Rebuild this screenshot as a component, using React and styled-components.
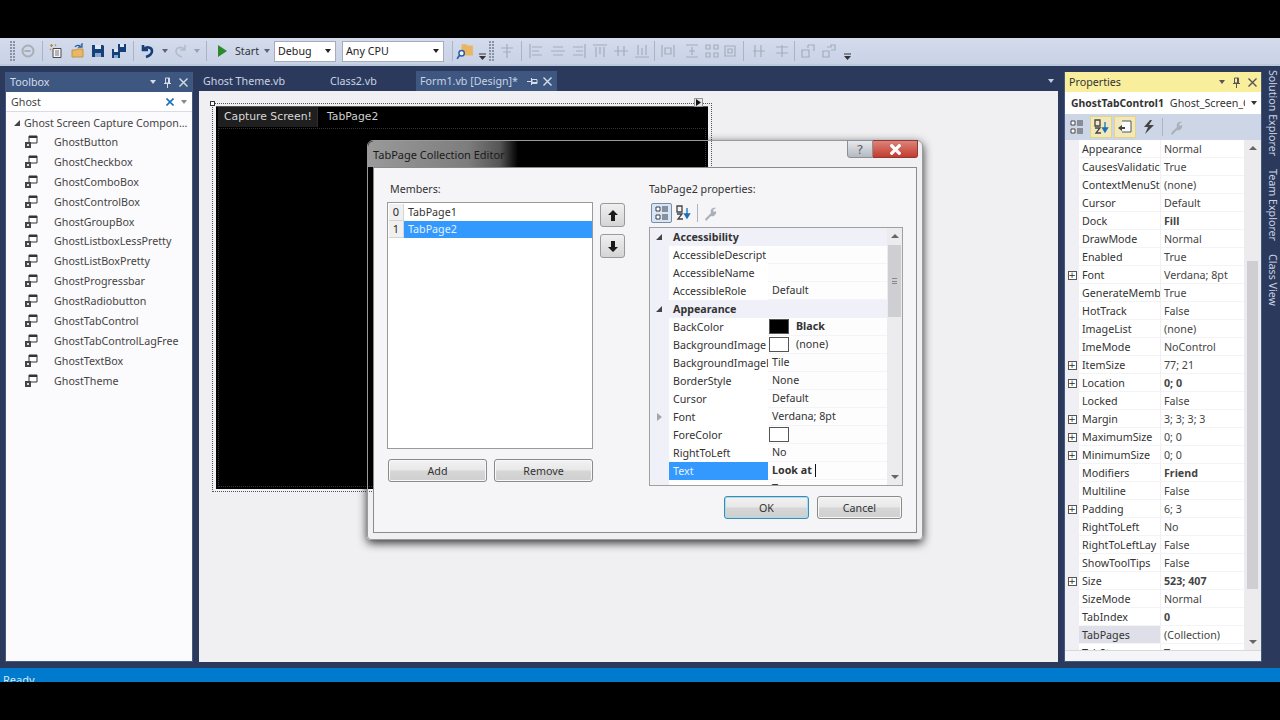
import styled, { createGlobalStyle } from 'styled-components'

const GlobalStyle = createGlobalStyle`
    html, body {
        margin: 0;
        padding: 0;
        background: #000;
        overflow: hidden;
    }
    * {
        box-sizing: border-box;
    }
    svg {
        flex: none;
    }
`

const toolboxItems = ['GhostButton', 'GhostCheckbox', 'GhostComboBox', 'GhostControlBox', 'GhostGroupBox', 'GhostListboxLessPretty', 'GhostListBoxPretty', 'GhostProgressbar', 'GhostRadiobutton', 'GhostTabControl', 'GhostTabControlLagFree', 'GhostTextBox', 'GhostTheme']

const propertyRows = [
    ['Appearance', 'Normal'],
    ['CausesValidatic', 'True'],
    ['ContextMenuSt', '(none)'],
    ['Cursor', 'Default'],
    ['Dock', 'Fill', 'bold'],
    ['DrawMode', 'Normal'],
    ['Enabled', 'True'],
    ['Font', 'Verdana; 8pt', '', 'plus'],
    ['GenerateMemb', 'True'],
    ['HotTrack', 'False'],
    ['ImageList', '(none)'],
    ['ImeMode', 'NoControl'],
    ['ItemSize', '77; 21', '', 'plus'],
    ['Location', '0; 0', 'bold', 'plus'],
    ['Locked', 'False'],
    ['Margin', '3; 3; 3; 3', '', 'plus'],
    ['MaximumSize', '0; 0', '', 'plus'],
    ['MinimumSize', '0; 0', '', 'plus'],
    ['Modifiers', 'Friend', 'bold'],
    ['Multiline', 'False'],
    ['Padding', '6; 3', '', 'plus'],
    ['RightToLeft', 'No'],
    ['RightToLeftLay', 'False'],
    ['ShowToolTips', 'False'],
    ['Size', '523; 407', 'bold', 'plus'],
    ['SizeMode', 'Normal'],
    ['TabIndex', '0', 'bold'],
    ['TabPages', '(Collection)', 'picked'],
    ['TabStop', 'True'],
]

const dialogRows = [
    { name: 'Accessibility', category: true },
    { name: 'AccessibleDescript', value: '' },
    { name: 'AccessibleName', value: '' },
    { name: 'AccessibleRole', value: 'Default' },
    { name: 'Appearance', category: true },
    { name: 'BackColor', value: 'Black', swatch: '#000', bold: true },
    { name: 'BackgroundImage', value: '(none)', swatch: '#fff' },
    { name: 'BackgroundImageL', value: 'Tile' },
    { name: 'BorderStyle', value: 'None' },
    { name: 'Cursor', value: 'Default' },
    { name: 'Font', value: 'Verdana; 8pt', arrow: true },
    { name: 'ForeColor', value: '', swatch: '#fff' },
    { name: 'RightToLeft', value: 'No' },
    { name: 'Text', value: 'Look at', bold: true, picked: true },
    { name: 'UseVisualStyleBack', value: 'True' },
]

function Svg({ size = 16, children }) {
    return <svg width={size} height={size} viewBox="0 0 16 16">{children}</svg>
}

const BackIcon = () => (
    <Svg>
        <circle cx="8" cy="8" r="5.5" fill="none" stroke="#a9adb4" strokeWidth="2" />
        <path d="M4.5 8h6" stroke="#a9adb4" strokeWidth="2" />
    </Svg>
)
const NewProjectIcon = () => (
    <Svg>
        <path d="M5 5.5h8v9H5z" fill="#f4f4f6" stroke="#4a4a4a" />
        <path d="M2 2.5h3M3.5 1v3M7 1.5l1 1.5M2 7l1-1" stroke="#c08a2c" strokeWidth="1.2" />
        <path d="M7 8h4M7 10h4M7 12h4" stroke="#777" />
    </Svg>
)
const OpenIcon = () => (
    <Svg>
        <path d="M2 7h4l1-1h6v8H2z" fill="#e9b866" stroke="#c6923f" />
        <path d="M5 4c1-2 4-2 5-1l-1 1h3V1l-1 1" fill="none" stroke="#2c5f9e" strokeWidth="1.3" />
    </Svg>
)
const SaveIcon = () => (
    <Svg>
        <path d="M2 2h11l1 1v11H2z" fill="#16407c" />
        <path d="M5 2h6v4H5z" fill="#dfe7f3" />
        <path d="M5 10h6v4H5z" fill="#8ea8cc" />
    </Svg>
)
const SaveAllIcon = () => (
    <Svg>
        <path d="M7 1h8v8H7z" fill="#16407c" />
        <path d="M9 1h4v3H9z" fill="#dfe7f3" />
        <path d="M1 6h8v9H1z" fill="#16407c" />
        <path d="M3 6h4v3H3z" fill="#dfe7f3" />
        <path d="M3 12h4v3H3z" fill="#8ea8cc" />
    </Svg>
)
const UndoIcon = ({ color = '#173f7a', width = 2.6 }) => (
    <Svg>
        <path d="M4 2v5h5" fill="none" stroke={color} strokeWidth={width} />
        <path d="M4.5 6.5C7 3 13 4 13 8c0 3-3 5-6 6" fill="none" stroke={color} strokeWidth={width} />
    </Svg>
)
const RedoIcon = () => (
    <Svg>
        <path d="M12 2v5H7" fill="none" stroke="#b3bcc8" strokeWidth="1.6" />
        <path d="M11.5 6.5C9 3 3 4 3 8c0 3 3 5 6 6" fill="none" stroke="#b3bcc8" strokeWidth="1.6" />
    </Svg>
)
const PlayIcon = () => (
    <Svg>
        <path d="M4 2l9 6-9 6z" fill="#2c8a2c" />
    </Svg>
)
const FindIcon = () => (
    <Svg size={18}>
        <path d="M5 2h4l1 1h5v9H5z" fill="#e9b560" />
        <circle cx="5" cy="10" r="2.4" fill="#f3f6fb" stroke="#2b5ea8" strokeWidth="1.3" />
        <path d="M3 12l-2 3" stroke="#2b5ea8" strokeWidth="1.6" />
    </Svg>
)

// layout icons on the right of the toolbar, all greyed out
const layoutPaths = {
    center: 'M8 1v14M2 5h12M4 9h8',
    alignLeft: 'M2 1v14M4 4h10M4 8h7M4 12h10',
    alignMid: 'M3 4h10M1 8h14M3 12h10',
    alignRight: 'M14 1v14M2 4h10M5 8h7M2 12h10',
    alignTop: 'M1 2h14M4 4v10M8 4v7M12 4v10',
    alignCenter: 'M1 8h14M5 3v10M11 3v10',
    alignBottom: 'M1 14h14M4 2v10M8 5v7M12 2v10',
    spaceH: 'M2 2v12M14 2v12M5 5h6v6H5z',
    spaceV: 'M2 2h12M2 14h12M8 4v8M5 8h6',
    tile: 'M2 2h4v4H2zM10 2h4v4h-4zM2 10h4v4H2zM10 10h4v4h-4z',
    order: 'M3 3h10v10H3zM6 6h4v4H6z',
    centerH: 'M4 2v12M10 2v12M2 8h12',
    centerV: 'M2 4h12M2 10h12M8 2v12',
    front: 'M2 7h7v7H2zM8 2h6v6M8 5V2',
    back: 'M2 8h6v6H2zM6 4h4V2h4v5h-4',
}

const LayoutIcon = ({ name }) => (
    <Svg>
        <path d={layoutPaths[name]} fill="none" stroke="#a4adba" strokeWidth="1.2" />
    </Svg>
)

const DownCaret = ({ color = '#5c6470' }) => (
    <svg width="6" height="4" viewBox="0 0 6 4"><path d="M0 0h6L3 4z" fill={color} /></svg>
)

const OverflowCaret = () => (
    <svg width="7" height="7" viewBox="0 0 7 7">
        <path d="M0 1h7" stroke="#333" />
        <path d="M0 3h7L3.5 7z" fill="#333" />
    </svg>
)

const PinIcon = ({ color }) => (
    <svg width="9" height="11" viewBox="0 0 9 11">
        <path d="M2.5 1h4v5h-4zM1 6.5h7M4.5 7v4M5.5 1v5" fill="none" stroke={color} />
    </svg>
)

const PinSideIcon = () => (
    <svg width="11" height="9" viewBox="0 0 11 9">
        <path d="M10 2.5v4H5v-4zM4.5 1v7M4 4.5H0M10 5.5H5" fill="none" stroke="#d5dde8" />
    </svg>
)

const CloseIcon = ({ color, size = 9, width = 1.4 }) => (
    <svg width={size} height={size} viewBox="0 0 9 9">
        <path d="M0.5 0.5l8 8M8.5 0.5l-8 8" stroke={color} strokeWidth={width} />
    </svg>
)

const ComponentIcon = () => (
    <svg width="14" height="14" viewBox="0 0 14 14">
        <path d="M5 1h8v7H5z" fill="#fff" stroke="#333" />
        <path d="M5 1h8v2H5z" fill="#333" />
        <path d="M1 7h6v6H1z" fill="#444" />
        <path d="M3 9h2v2H3z" fill="#ddd" />
    </svg>
)

const CategorizedIcon = ({ color = '#444' }) => (
    <Svg>
        <path d="M2 2h4v4H2zM2 10h4v4H2z" fill="#fff" stroke={color} />
        <path d="M8 2h6M8 4h6M8 6h6M8 10h6M8 12h6M8 14h6" stroke={color} />
    </Svg>
)

const AlphaIcon = () => (
    <Svg>
        <path d="M2 1h5v6H2zM2 9h5l-4 5h5" fill="none" stroke="#444" strokeWidth="1.3" />
        <path d="M12 3v9M9.5 9l2.5 4 2.5-4z" stroke="#1d70b8" fill="#1d70b8" strokeWidth="1.3" />
    </Svg>
)

const PagesIcon = () => (
    <Svg>
        <path d="M5 2h9v11H5" fill="#fbfbfd" stroke="#555" />
        <path d="M1 9l4-3v2h3v2H5v2z" fill="#444" />
    </Svg>
)

const BoltIcon = () => (
    <Svg>
        <path d="M9 1L3 8h4l-3 7 9-9H8l3-5z" fill="#444" />
    </Svg>
)

const WrenchIcon = () => (
    <Svg>
        <path d="M3 14l6-6c-1-3 1-6 5-5l-3 2 1 2 2-1c1 4-3 6-5 5l-5 5z" fill="#aab0b8" />
    </Svg>
)

const Arrow = ({ up }) => (
    <svg width="10" height="11" viewBox="0 0 10 11">
        <path d={up ? 'M5 0l5 5H7v6H3V5H0z' : 'M5 11L0 6h3V0h4v6h3z'} fill="#1a1a1a" />
    </svg>
)

const Triangle = styled.span`
    width: 0;
    height: 0;
    border-style: solid;
    border-width: 0 0 6px 6px;
    border-color: transparent transparent #444 transparent;
`

const HollowArrow = styled.span`
    width: 0;
    height: 0;
    border-style: solid;
    border-width: 4px 0 4px 5px;
    border-color: transparent transparent transparent #a5a5a5;
`

export default function App() {
    return (
        <Page>
            <GlobalStyle />
            <Letterbox $h={38} />

            <Toolbar>
                <Grip />
                <Tool $w={24}><BackIcon /></Tool>
                <Sep />
                <Tool $w={22}><NewProjectIcon /></Tool>
                <Tool $w={22}><OpenIcon /></Tool>
                <Tool $w={18}><SaveIcon /></Tool>
                <Tool $w={24}><SaveAllIcon /></Tool>
                <Sep />
                <Tool $w={22}><UndoIcon /></Tool>
                <Tool $w={14}><DownCaret /></Tool>
                <Tool $w={18}><RedoIcon /></Tool>
                <Tool $w={14}><DownCaret color="#9aa3af" /></Tool>
                <Sep />
                <Tool $w={26}><PlayIcon /></Tool>
                <StartLabel>Start</StartLabel>
                <Tool $w={15}><DownCaret /></Tool>
                <Combo $w={62}>Debug<DownCaret color="#222" /></Combo>
                <Combo $w={102}>Any CPU<DownCaret color="#222" /></Combo>
                <Sep />
                <Tool $w={20}><FindIcon /></Tool>
                <Tool $w={14} $end><OverflowCaret /></Tool>
                <Grip />
                <Tool $w={24}><LayoutIcon name="center" /></Tool>
                <Sep />
                <Tool $w={23}><LayoutIcon name="alignLeft" /></Tool>
                <Tool $w={21}><LayoutIcon name="alignMid" /></Tool>
                <Tool $w={21}><LayoutIcon name="alignRight" /></Tool>
                <Tool $w={21}><LayoutIcon name="alignTop" /></Tool>
                <Tool $w={21}><LayoutIcon name="alignCenter" /></Tool>
                <Tool $w={21}><LayoutIcon name="alignBottom" /></Tool>
                <Sep />
                <Tool $w={22}><LayoutIcon name="spaceH" /></Tool>
                <Tool $w={25}><LayoutIcon name="spaceV" /></Tool>
                <Tool $w={15}><LayoutIcon name="tile" /></Tool>
                <Tool $w={22}><LayoutIcon name="order" /></Tool>
                <Sep />
                <Tool $w={26}><LayoutIcon name="centerH" /></Tool>
                <Tool $w={20}><LayoutIcon name="centerV" /></Tool>
                <Sep />
                <Tool $w={22}><LayoutIcon name="front" /></Tool>
                <Tool $w={20}><LayoutIcon name="back" /></Tool>
                <Tool $w={16} $end><OverflowCaret /></Tool>
            </Toolbar>

            <Workspace>
                <ToolWindow $w={188}>
                    <WindowTitle>
                        <span>Toolbox</span>
                        <TitleIcons>
                            <DownCaret color="#d5dde8" />
                            <PinIcon color="#d5dde8" />
                            <CloseIcon color="#d5dde8" />
                        </TitleIcons>
                    </WindowTitle>
                    <SearchBox>
                        <span>Ghost</span>
                        <SearchIcons>
                            <CloseIcon color="#1d70b8" size={8} width={1.8} />
                            <DownCaret color="#888" />
                        </SearchIcons>
                    </SearchBox>
                    <Tree>
                        <TreeHeader><Triangle />Ghost Screen Capture Compon...</TreeHeader>
                        {toolboxItems.map((item) => (
                            <TreeItem key={item}><ComponentIcon />{item}</TreeItem>
                        ))}
                    </Tree>
                </ToolWindow>

                <Document>
                    <DocTabs>
                        <DocTab $w={127}>Ghost Theme.vb</DocTab>
                        <DocTab $w={90}>Class2.vb</DocTab>
                        <DocTab $w={141} $active>
                            Form1.vb [Design]*
                            <DocTabIcons>
                                <PinSideIcon />
                                <CloseIcon color="#d5dde8" />
                            </DocTabIcons>
                        </DocTab>
                        <DocMenu><DownCaret color="#c5cfdd" /></DocMenu>
                    </DocTabs>
                    <Designer>
                        <Selection>
                            <CornerHandle />
                            <SmartTag><svg width="5" height="7" viewBox="0 0 5 7"><path d="M0 0l5 3.5L0 7z" fill="#111" /></svg></SmartTag>
                            <GhostForm>
                                <GhostTabs>
                                    <GhostTab $active>Capture Screen!</GhostTab>
                                    <GhostTab>TabPage2</GhostTab>
                                </GhostTabs>
                                <GhostBody />
                            </GhostForm>
                        </Selection>
                    </Designer>
                </Document>

                <ToolWindow $w={198}>
                    <WindowTitle $active>
                        <span>Properties</span>
                        <TitleIcons>
                            <DownCaret color="#555" />
                            <PinIcon color="#555" />
                            <CloseIcon color="#555" />
                        </TitleIcons>
                    </WindowTitle>
                    <ObjectPicker>
                        <ObjectName>GhostTabControl1</ObjectName>
                        <ObjectType>Ghost_Screen_C</ObjectType>
                        <DownCaret color="#333" />
                    </ObjectPicker>
                    <PropsToolbar>
                        <PropsTool><CategorizedIcon /></PropsTool>
                        <PropsTool $on><AlphaIcon /></PropsTool>
                        <PropsTool $on><PagesIcon /></PropsTool>
                        <PropsTool><BoltIcon /></PropsTool>
                        <PropsSep />
                        <PropsTool><WrenchIcon /></PropsTool>
                    </PropsToolbar>
                    <GridWrap>
                        <GridList>
                            {propertyRows.map(([name, value, kind, plus]) => (
                                <GridRow key={name}>
                                    <GridMargin>{plus && <PlusBox>+</PlusBox>}</GridMargin>
                                    <GridName $picked={kind === 'picked'}>{name}</GridName>
                                    <GridValue $bold={kind === 'bold'}>{value}</GridValue>
                                </GridRow>
                            ))}
                        </GridList>
                        <ScrollTrack $w={17}>
                            <ScrollCaret $up />
                            <ScrollThumb $top={121} $h={328} $inset={3} />
                            <ScrollCaret />
                        </ScrollTrack>
                    </GridWrap>
                    <GridFooter />
                </ToolWindow>

                <SideTabs>
                    <SideTab>Solution Explorer</SideTab>
                    <SideTab>Team Explorer</SideTab>
                    <SideTab>Class View</SideTab>
                </SideTabs>
            </Workspace>

            <StatusBar>Ready</StatusBar>
            <Letterbox $h={38} />

            <Dialog>
                <Caption>
                    <CaptionTitle>TabPage Collection Editor</CaptionTitle>
                    <CaptionButtons>
                        <HelpButton>?</HelpButton>
                        <RedClose><CloseIcon color="#fff" size={11} width={2.6} /></RedClose>
                    </CaptionButtons>
                </Caption>
                <Client>
                    <Columns>
                        <MembersColumn>
                            <FieldLabel $indent={3}>Members:</FieldLabel>
                            <MembersList>
                                <MemberRow><MemberIndex>0</MemberIndex><MemberName>TabPage1</MemberName></MemberRow>
                                <MemberRow><MemberIndex>1</MemberIndex><MemberName $picked>TabPage2</MemberName></MemberRow>
                            </MembersList>
                            <MemberButtons>
                                <DialogButton $w={99}>Add</DialogButton>
                                <DialogButton $w={99}>Remove</DialogButton>
                            </MemberButtons>
                        </MembersColumn>
                        <ArrowColumn>
                            <ArrowButton><Arrow up /></ArrowButton>
                            <ArrowButton><Arrow /></ArrowButton>
                        </ArrowColumn>
                        <PropsColumn>
                            <FieldLabel $indent={0}>TabPage2 properties:</FieldLabel>
                            <DialogTools>
                                <DialogTool $on><CategorizedIcon color="#3a3a4a" /></DialogTool>
                                <DialogTool><AlphaIcon /></DialogTool>
                                <DialogSep />
                                <DialogTool><WrenchIcon /></DialogTool>
                            </DialogTools>
                            <DialogGrid>
                                <DialogGridList>
                                    {dialogRows.map((row) => row.category ? (
                                        <CategoryRow key={row.name}>
                                            <CategoryMark><Triangle /></CategoryMark>
                                            {row.name}
                                        </CategoryRow>
                                    ) : (
                                        <DialogRow key={row.name}>
                                            <DialogMargin>{row.arrow && <HollowArrow />}</DialogMargin>
                                            <DialogName $picked={row.picked}>{row.name}</DialogName>
                                            <DialogValue $bold={row.bold}>
                                                {row.swatch && <Swatch $color={row.swatch} />}
                                                {row.value}
                                                {row.picked && <Cursor />}
                                            </DialogValue>
                                        </DialogRow>
                                    ))}
                                </DialogGridList>
                                <ScrollTrack $w={15}>
                                    <ScrollCaret $up />
                                    <ScrollThumb $top={17} $h={72} $inset={1}><ThumbGrip /></ScrollThumb>
                                    <ScrollCaret />
                                </ScrollTrack>
                            </DialogGrid>
                        </PropsColumn>
                    </Columns>
                    <Footer>
                        <DialogButton $w={85} $default>OK</DialogButton>
                        <DialogButton $w={85}>Cancel</DialogButton>
                    </Footer>
                </Client>
            </Dialog>
        </Page>
    )
}

const UI_FONT = `"Noto Sans", "Open Sans", sans-serif`
const TEXT_SIZE = '10.7px'

const Page = styled.div`
    position: relative;
    width: 1280px;
    height: 720px;
    overflow: hidden;
    font-family: ${UI_FONT};
    font-size: ${TEXT_SIZE};
    color: #2a2a2a;
`

const Letterbox = styled.div`
    height: ${(p) => p.$h}px;
    background: #000;
`

const Toolbar = styled.div`
    display: flex;
    align-items: center;
    height: 28px;
    padding: 0 0 0 10px;
    background: linear-gradient(#d3dbec, #c9d3e6);
    border-bottom: 2px solid #bcc8dc;
`

const Grip = styled.div`
    width: 6px;
    height: 20px;
    flex: none;
    background-image: radial-gradient(circle at 1px 1px, #8a93a2 1px, transparent 1.2px);
    background-size: 3px 3px;
`

const Tool = styled.div`
    display: flex;
    justify-content: center;
    align-items: ${(p) => (p.$end ? 'flex-end' : 'center')};
    width: ${(p) => p.$w}px;
    height: ${(p) => (p.$end ? '18px' : 'auto')};
    flex: none;
`

const Sep = styled.div`
    width: 1px;
    height: 20px;
    flex: none;
    margin: 0 2px;
    background: #aab4c6;
`

const StartLabel = styled.span`
    font-size: ${TEXT_SIZE};
    color: #333;
    width: 24px;
    flex: none;
`

const Combo = styled.div`
    display: flex;
    align-items: center;
    justify-content: space-between;
    width: ${(p) => p.$w}px;
    height: 21px;
    flex: none;
    margin-right: 6px;
    padding: 0 4px 0 3px;
    background: #fff;
    border: 1px solid #a5adbb;
    font-size: ${TEXT_SIZE};
    color: #222;
`

const Workspace = styled.div`
    display: flex;
    height: 602px;
    padding: 6px 0 6px 5px;
    background: #2b3a5c;
`

const ToolWindow = styled.section`
    display: flex;
    flex-direction: column;
    width: ${(p) => p.$w}px;
    flex: none;
    background: #fbfafc;
    border: 1px solid #44597e;
    border-top: none;
`

const WindowTitle = styled.header`
    display: flex;
    align-items: center;
    justify-content: space-between;
    height: 20px;
    flex: none;
    padding: 0 4px 0 4px;
    font-size: ${TEXT_SIZE};
    background: ${(p) => (p.$active ? '#f8ee9c' : '#3e5781')};
    color: ${(p) => (p.$active ? '#333' : '#d5dde8')};
`

const TitleIcons = styled.div`
    display: flex;
    align-items: center;
    gap: 7px;
`

const SearchBox = styled.div`
    display: flex;
    align-items: center;
    justify-content: space-between;
    height: 20px;
    flex: none;
    padding: 0 5px;
    background: #fff;
    font-size: ${TEXT_SIZE};
    color: #444;
    border-bottom: 1px solid #d8dce4;
`

const SearchIcons = styled.div`
    display: flex;
    align-items: center;
    gap: 7px;
`

const Tree = styled.div`
    display: flex;
    flex-direction: column;
    padding-top: 1px;
`

const TreeHeader = styled.div`
    display: flex;
    align-items: center;
    gap: 4px;
    height: 19px;
    padding-left: 8px;
    font-size: ${TEXT_SIZE};
    color: #444;
    white-space: nowrap;
`

const TreeItem = styled.div`
    display: flex;
    align-items: center;
    gap: 16px;
    height: 19.9px;
    padding-left: 18px;
    font-size: ${TEXT_SIZE};
    color: #444;
`

const Document = styled.main`
    display: flex;
    flex-direction: column;
    width: 859px;
    flex: none;
    margin: -4px 6px 0;
`

const DocTabs = styled.div`
    display: flex;
    align-items: flex-end;
    height: 23px;
    flex: none;
`

const DocTab = styled.div`
    display: flex;
    align-items: center;
    width: ${(p) => p.$w}px;
    height: 20px;
    padding-left: 4px;
    font-size: ${TEXT_SIZE};
    color: #c9d3e2;
    background: ${(p) => (p.$active ? '#3e5781' : 'transparent')};
    white-space: nowrap;
`

const DocTabIcons = styled.span`
    display: flex;
    align-items: center;
    gap: 5px;
    margin-left: 9px;
`

const DocMenu = styled.div`
    display: flex;
    align-items: center;
    justify-content: flex-end;
    flex: 1;
    height: 20px;
    padding-right: 4px;
`

const Designer = styled.div`
    flex: 1;
    padding: 12px 0 0 13px;
    background: #f0eff2;
`

const Selection = styled.div`
    position: relative;
    width: 500px;
    height: 389px;
    padding: 2px 3px;
    border: 1px dotted #555;
`

const CornerHandle = styled.span`
    position: absolute;
    top: -3px;
    left: -3px;
    width: 5px;
    height: 5px;
    background: #fff;
    border: 1px solid #333;
`

const SmartTag = styled.span`
    position: absolute;
    top: -6px;
    right: 8px;
    display: flex;
    align-items: center;
    justify-content: center;
    width: 9px;
    height: 9px;
    background: #e8e8ea;
    border: 1px solid #999;
`

const GhostForm = styled.div`
    display: flex;
    flex-direction: column;
    height: 100%;
    padding: 0 2px 2px;
    background: #000;
    border-top: 1px solid #555;
`

const GhostTabs = styled.div`
    display: flex;
    height: 20px;
    flex: none;
`

const GhostTab = styled.div`
    display: flex;
    align-items: center;
    padding: 0 6px 2px 6px;
    width: ${(p) => (p.$active ? '100px' : 'auto')};
    font-family: "DejaVu Sans", sans-serif;
    font-size: 10.8px;
    white-space: nowrap;
    color: ${(p) => (p.$active ? '#d8d8d8' : '#cfcfcf')};
    background: ${(p) => (p.$active ? '#1f1f1f' : 'transparent')};
    border-right: 1px solid #2e2e2e;
    &:last-child {
        border-right: none;
        padding-left: 9px;
    }
`

const GhostBody = styled.div`
    flex: 1;
    margin-top: 1px;
    border: 1px dotted #333;
`

const ObjectPicker = styled.div`
    display: flex;
    align-items: center;
    gap: 6px;
    height: 22px;
    flex: none;
    padding: 0 4px 0 6px;
    background: #fff;
    font-size: ${TEXT_SIZE};
    white-space: nowrap;
    color: #333;
`

const ObjectName = styled.b`
    font-size: 10.4px;
`

const ObjectType = styled.span`
    width: 78px;
    overflow: hidden;
`

const PropsToolbar = styled.div`
    display: flex;
    align-items: center;
    gap: 2px;
    height: 26px;
    flex: none;
    padding-left: 1px;
    background: #cdd6e6;
`

const PropsTool = styled.div`
    display: flex;
    align-items: center;
    justify-content: center;
    width: 22px;
    height: 22px;
    background: ${(p) => (p.$on ? '#f0e9bd' : 'transparent')};
    border: 1px solid ${(p) => (p.$on ? '#e7d27d' : 'transparent')};
`

const PropsSep = styled.div`
    width: 1px;
    height: 18px;
    background: #aab4c6;
`

const GridWrap = styled.div`
    display: flex;
    height: 510px;
    flex: none;
    overflow: hidden;
`

const GridList = styled.div`
    flex: 1;
    min-width: 0;
`

const GridRow = styled.div`
    display: flex;
    height: 18px;
`

const GridMargin = styled.div`
    display: flex;
    align-items: center;
    justify-content: center;
    width: 14px;
    flex: none;
    background: #f0f0f4;
`

const PlusBox = styled.span`
    display: flex;
    align-items: center;
    justify-content: center;
    width: 9px;
    height: 9px;
    border: 1px solid #555;
    background: #fff;
    font-size: 9px;
    line-height: 1;
    font-family: "DejaVu Sans", sans-serif;
`

const GridName = styled.div`
    width: 82px;
    flex: none;
    padding-left: 3px;
    line-height: 19px;
    font-size: ${TEXT_SIZE};
    overflow: hidden;
    white-space: nowrap;
    color: #333;
    background: ${(p) => (p.$picked ? '#dedfe8' : '#fff')};
    border-bottom: 1px solid #f4f4f6;
    border-right: 1px solid #f0f0f4;
`

const GridValue = styled.div`
    flex: 1;
    padding-left: 3px;
    line-height: 19px;
    font-size: ${TEXT_SIZE};
    font-weight: ${(p) => (p.$bold ? 700 : 400)};
    overflow: hidden;
    color: #444;
    background: #fff;
    border-bottom: 1px solid #f4f4f6;
`

const ScrollTrack = styled.div`
    position: relative;
    display: flex;
    flex-direction: column;
    justify-content: space-between;
    align-items: center;
    width: ${(p) => p.$w}px;
    flex: none;
    height: 100%;
    padding: 6px 0;
    background: #ececef;
`

const ScrollThumb = styled.div`
    position: absolute;
    top: ${(p) => p.$top}px;
    left: ${(p) => p.$inset}px;
    right: ${(p) => p.$inset}px;
    height: ${(p) => p.$h}px;
    display: flex;
    align-items: center;
    justify-content: center;
    background: #cfcfd3;
`

const ThumbGrip = styled.span`
    width: 5px;
    height: 6px;
    border-top: 1px solid #888;
    border-bottom: 1px solid #888;
    background: linear-gradient(#888, #888) center / 100% 1px no-repeat;
`

const ScrollCaret = styled.span`
    width: 0;
    height: 0;
    border-style: solid;
    border-width: ${(p) => (p.$up ? '0 4px 4px 4px' : '4px 4px 0 4px')};
    border-color: ${(p) => (p.$up ? 'transparent transparent #666 transparent' : '#666 transparent transparent transparent')};
`

const GridFooter = styled.div`
    flex: 1;
    background: #f5f5f8;
    border-top: 1px solid #d8d8de;
`

const SideTabs = styled.aside`
    display: flex;
    flex-direction: column;
    gap: 13px;
    padding: 0 0 0 10px;
    margin-top: -2px;
    overflow: hidden;
`

const SideTab = styled.div`
    writing-mode: vertical-rl;
    font-size: ${TEXT_SIZE};
    color: #c9d3e2;
    white-space: nowrap;
`

const StatusBar = styled.footer`
    height: 14px;
    padding: 5px 0 0 3px;
    overflow: hidden;
    background: #007acc;
    font-size: 11px;
    line-height: 14px;
    color: #d5e8f6;
`

const Dialog = styled.div`
    position: absolute;
    top: 140px;
    left: 367px;
    display: flex;
    flex-direction: column;
    width: 556px;
    height: 400px;
    padding: 0 5px 6px;
    border: 1px solid #9a9a9a;
    border-radius: 6px 6px 4px 4px;
    box-shadow: 0 3px 10px rgba(0, 0, 0, 0.8);
`

const Caption = styled.div`
    display: flex;
    justify-content: space-between;
    height: 26px;
    flex: none;
    margin: 0 -5px;
    padding-left: 5px;
    background: linear-gradient(90deg, #9a9a9a 0, #7d7d7d 100px, #555 132px, rgba(0, 0, 0, 0) 150px);
    border-radius: 6px 6px 0 0;
`

const CaptionTitle = styled.span`
    align-self: center;
    font-size: 11px;
    color: #1a1a1a;
`

const CaptionButtons = styled.div`
    display: flex;
    height: 18px;
    margin: -1px 4px 0 0;
`

const HelpButton = styled.div`
    display: flex;
    align-items: center;
    justify-content: center;
    width: 26px;
    font-family: "DejaVu Sans", sans-serif;
    font-size: 13px;
    color: #666;
    background: linear-gradient(#e6e8ec, #b4b9c1);
    border: 1px solid #8a8f98;
    border-radius: 0 0 0 3px;
`

const RedClose = styled.div`
    display: flex;
    align-items: center;
    justify-content: center;
    width: 45px;
    background: linear-gradient(#dc8378, #c33c30);
    border: 1px solid #8e3a33;
    border-left: none;
    border-radius: 0 0 3px 0;
`

const Client = styled.div`
    display: flex;
    flex-direction: column;
    flex: 1;
    padding: 14px 14px 0 13px;
    background: #f5f4f6;
    border: 1px solid #8b8b8b;
`

const Columns = styled.div`
    display: flex;
    height: 304px;
    flex: none;
`

const MembersColumn = styled.div`
    display: flex;
    flex-direction: column;
    width: 206px;
    flex: none;
`

const FieldLabel = styled.div`
    height: 20px;
    flex: none;
    padding-left: ${(p) => p.$indent}px;
    font-size: ${TEXT_SIZE};
    line-height: 14px;
    color: #333;
`

const MembersList = styled.div`
    height: 247px;
    flex: none;
    background: #fff;
    border: 1px solid #9a9a9a;
    padding: 1px 0 0 1px;
`

const MemberRow = styled.div`
    display: flex;
    height: 17px;
`

const MemberIndex = styled.span`
    width: 15px;
    flex: none;
    text-align: center;
    font-size: 11px;
    line-height: 16px;
    background: #f0f0f0;
    border: 1px solid #d5d5d5;
    border-width: 0 1px 1px 0;
`

const MemberName = styled.span`
    flex: 1;
    padding-left: 4px;
    font-size: ${TEXT_SIZE};
    line-height: 16px;
    color: ${(p) => (p.$picked ? '#e4f1fd' : '#333')};
    background: ${(p) => (p.$picked ? '#3399ff' : 'transparent')};
`

const MemberButtons = styled.div`
    display: flex;
    justify-content: space-between;
    margin: 10px 0 0 1px;
`

const DialogButton = styled.button`
    width: ${(p) => p.$w}px;
    height: 23px;
    padding: 0;
    font-family: ${UI_FONT};
    font-size: ${TEXT_SIZE};
    color: #333;
    background: linear-gradient(#f2f2f2 0, #e8e8e8 48%, #d6d6d6 52%, #cfcfcf 100%);
    border: 1px solid ${(p) => (p.$default ? '#3c8cb0' : '#8a8a8a')};
    border-radius: 3px;
    box-shadow: ${(p) => (p.$default ? 'inset 0 0 0 1px #a9dcf0' : 'inset 0 0 0 1px #f8f8f8')};
`

const ArrowColumn = styled.div`
    display: flex;
    flex-direction: column;
    gap: 7px;
    width: 25px;
    flex: none;
    margin: 21px 24px 0 7px;
`

const ArrowButton = styled.div`
    display: flex;
    align-items: center;
    justify-content: center;
    height: 24px;
    background: linear-gradient(#f0f0f0, #d4d4d4);
    border: 1px solid #9a9a9a;
    border-radius: 3px;
`

const PropsColumn = styled.div`
    display: flex;
    flex-direction: column;
    width: 254px;
    flex: none;
`

const DialogTools = styled.div`
    display: flex;
    align-items: center;
    height: 25px;
    flex: none;
    padding: 0 0 3px 2px;
`

const DialogTool = styled.div`
    display: flex;
    align-items: center;
    justify-content: center;
    width: 21px;
    height: 20px;
    background: ${(p) => (p.$on ? '#d6e6f5' : 'transparent')};
    border: 1px solid ${(p) => (p.$on ? '#7d8aa6' : 'transparent')};
    border-radius: 2px;
`

const DialogSep = styled(PropsSep)`
    margin: 0 1px 0 4px;
`

const DialogGrid = styled.div`
    display: flex;
    height: 259px;
    flex: none;
    overflow: hidden;
    background: #fff;
    border: 1px solid #a0a0a0;
`

const DialogGridList = styled.div`
    flex: 1;
    min-width: 0;
`

const CategoryRow = styled.div`
    display: flex;
    align-items: center;
    height: 18px;
    font-size: ${TEXT_SIZE};
    font-weight: 700;
    color: #333;
    background: #f0f0f8;
`

const CategoryMark = styled.span`
    display: flex;
    align-items: center;
    justify-content: center;
    width: 23px;
    padding-right: 5px;
    flex: none;
`

const DialogRow = styled.div`
    display: flex;
    height: 18px;
`

const DialogMargin = styled.div`
    display: flex;
    align-items: center;
    justify-content: center;
    width: 19px;
    flex: none;
    background: #f0f0f8;
`

const DialogName = styled.div`
    width: 99px;
    flex: none;
    padding-left: 4px;
    font-size: ${TEXT_SIZE};
    line-height: 18px;
    overflow: hidden;
    white-space: nowrap;
    color: ${(p) => (p.$picked ? '#e4f1fd' : '#333')};
    background: ${(p) => (p.$picked ? '#3399ff' : '#fff')};
`

const DialogValue = styled.div`
    display: flex;
    align-items: center;
    flex: 1;
    padding: 0 0 1px 4px;
    font-size: ${TEXT_SIZE};
    font-weight: ${(p) => (p.$bold ? 700 : 400)};
    color: #333;
    background: #fdfdfe;
    border-bottom: 1px solid #f4f4f8;
`

const Swatch = styled.span`
    width: 20px;
    height: 15px;
    flex: none;
    margin: 0 7px 0 -3px;
    background: ${(p) => p.$color};
    border: 1px solid #555;
`

const Cursor = styled.span`
    width: 1px;
    height: 13px;
    margin-left: 3px;
    background: #111;
`

const Footer = styled.div`
    display: flex;
    justify-content: flex-end;
    gap: 8px;
    margin-top: 10px;
`
